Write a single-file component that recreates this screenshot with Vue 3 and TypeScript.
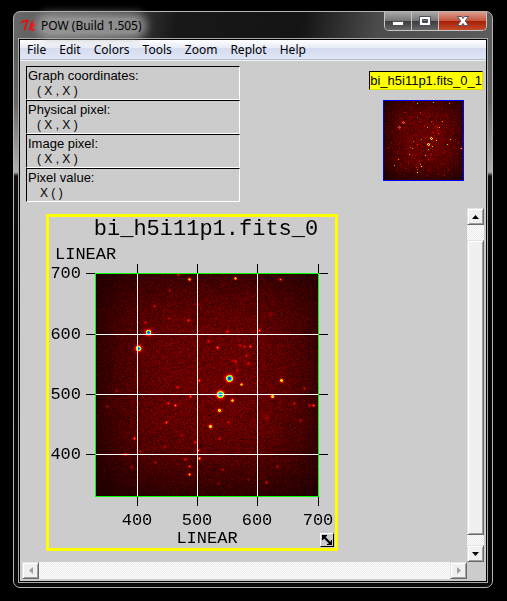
<script setup lang="ts">
import { onMounted, ref } from 'vue'

type Star = [x: number, y: number, peak: number, sigma?: number]

const menus = ['File', 'Edit', 'Colors', 'Tools', 'Zoom', 'Replot', 'Help']

const readouts = [
  { label: 'Graph coordinates:', value: '( X , X )', deep: false },
  { label: 'Physical pixel:', value: '( X , X )', deep: false },
  { label: 'Image pixel:', value: '( X , X )', deep: false },
  { label: 'Pixel value:', value: 'X ( )', deep: true },
]

const FIELD = 222

const xTicks = [
  { at: 88, label: '400' },
  { at: 148, label: '500' },
  { at: 208, label: '600' },
  { at: 269, label: '700' },
]
const yTicks = [
  { at: 56, label: '700' },
  { at: 117, label: '600' },
  { at: 177, label: '500' },
  { at: 237, label: '400' },
]

const stars: Star[] = [
  [52, 58, 1.32, 1.5], [42, 74, 1.28, 1.5], [133, 104, 1.38, 1.9], [124, 120, 1.3, 2],
  [93, 5, 0.75], [139, 4, 0.7], [184, 5, 0.4], [82, 0, 0.3], [73, 16, 0.2], [58, 32, 0.25],
  [101, 30, 0.3], [92, 46, 0.32], [73, 44, 0.16], [49, 48, 0.24], [131, 57, 0.3],
  [163, 56, 0.4], [112, 67, 0.22], [121, 73, 0.35], [144, 71, 0.2], [148, 72, 0.25],
  [154, 72, 0.33], [150, 81, 0.18], [152, 89, 0.25], [139, 87, 0.22], [136, 86, 0.14],
  [141, 96, 0.18], [145, 110, 0.6], [136, 126, 0.6, 1.1], [123, 136, 0.7, 1.2],
  [114, 152, 0.72, 1.2], [103, 106, 0.33], [185, 106, 0.7, 1.2], [176, 122, 0.7, 1.2],
  [208, 114, 0.24], [198, 129, 0.22], [213, 131, 0.25], [217, 131, 0.4], [204, 146, 0.22],
  [81, 113, 0.24], [94, 122, 0.34], [72, 129, 0.3], [79, 131, 0.34], [20, 116, 0.16],
  [11, 132, 0.18], [70, 148, 0.35], [132, 148, 0.2], [38, 164, 0.42], [29, 180, 0.42],
  [44, 177, 0.18], [59, 188, 0.18], [35, 193, 0.18], [68, 172, 0.16], [85, 161, 0.16],
  [99, 168, 0.27], [102, 176, 0.38], [103, 184, 0.58], [89, 185, 0.28], [93, 192, 0.32],
  [93, 200, 0.56], [123, 164, 0.22], [126, 195, 0.2], [181, 192, 0.22], [170, 208, 0.27],
  [170, 143, 0.1, 2], [122, 209, 0.15], [152, 205, 0.12], [174, 40, 0.1, 1.4],
]

const palette: [number, number, number, number][] = [
  [0, 0, 0, 0],
  [0.4, 255, 0, 0],
  [0.5, 255, 120, 0],
  [0.64, 255, 255, 0],
  [0.85, 60, 255, 40],
  [1.1, 0, 230, 255],
  [1.4, 20, 70, 255],
  [1.7, 20, 40, 255],
]

function heat(v: number): [number, number, number] {
  for (let i = 1; i < palette.length; i++) {
    const hi = palette[i]
    if (v <= hi[0]) {
      const lo = palette[i - 1]
      const t = Math.max(0, (v - lo[0]) / (hi[0] - lo[0]))
      return [lo[1] + (hi[1] - lo[1]) * t, lo[2] + (hi[2] - lo[2]) * t, lo[3] + (hi[3] - lo[3]) * t]
    }
  }
  return [20, 40, 255]
}

function drawField(canvas: HTMLCanvasElement, seed: number) {
  const size = canvas.width
  const scale = size / FIELD
  const ctx = canvas.getContext('2d')
  if (!ctx) return

  let state = seed
  const random = () => {
    state = (state * 1664525 + 1013904223) >>> 0
    return state / 4294967296
  }

  const flux = new Float32Array(size * size)
  for (let y = 0; y < size; y++) {
    for (let x = 0; x < size; x++) {
      const dx = (x / size - 0.52) * 2
      const dy = (y / size - 0.47) * 2
      const glow = 0.035 + 0.125 * Math.exp(-(dx ** 4 + dy ** 4) * 0.85 - (dx * dx + dy * dy) * 0.15)
      const grain = 0.5 + (random() + random()) * 0.5
      flux[y * size + x] = glow * grain
    }
  }

  for (const [sx, sy, peak, sigma = 0.95] of stars) {
    const cx = Math.round(sx * scale)
    const cy = Math.round(sy * scale)
    const s = Math.max(0.42, sigma * scale)
    for (let y = Math.max(0, cy - 7); y <= Math.min(size - 1, cy + 7); y++) {
      for (let x = Math.max(0, cx - 7); x <= Math.min(size - 1, cx + 7); x++) {
        const r2 = (x - cx) ** 2 + (y - cy) ** 2
        flux[y * size + x] += peak * Math.exp(-r2 / (2 * s * s))
        if (peak > 1) flux[y * size + x] += 0.14 * Math.exp(-r2 / (20 * scale * scale))
      }
    }
  }

  const image = ctx.createImageData(size, size)
  flux.forEach((v, i) => {
    const [r, g, b] = heat(v)
    image.data.set([r, g, b, 255], i * 4)
  })
  ctx.putImageData(image, 0, 0)
}

const field = ref<HTMLCanvasElement | null>(null)
const preview = ref<HTMLCanvasElement | null>(null)

onMounted(() => {
  if (field.value) drawField(field.value, 1505)
  if (preview.value) drawField(preview.value, 77)
})
</script>

<template>
  <main class="window">
    <header class="titlebar">
      <svg class="tk" viewBox="0 0 15 13" width="15" height="13" aria-hidden="true">
        <path d="M0.500 4C1 1.500 3 2 4.500 2L7.500 1.500M6.500 2C5 5 4 8 3.500 11.500" />
        <path d="M12 1C10.500 4 9 8 8.500 11.500M9.500 7.500C10.500 5.500 12.500 4.500 13.500 5.500C13.500 7 11.500 8 10 8L11.500 11.500L13.500 10" />
      </svg>
      <span class="title">POW (Build 1.505)</span>
      <div class="caption-buttons">
        <button class="caption" type="button" aria-label="Minimize">
          <svg viewBox="0 0 14 12" width="14" height="12"><rect x="1.500" y="6.500" width="11" height="4" fill="#fff" stroke="#4b5060" /></svg>
        </button>
        <button class="caption" type="button" aria-label="Maximize">
          <svg viewBox="0 0 14 12" width="14" height="12">
            <path d="M1.500 1.500h11v9h-11zM4.500 4.500v3h5v-3z" fill="#fff" fill-rule="evenodd" stroke="#4b5060" />
          </svg>
        </button>
        <button class="caption close" type="button" aria-label="Close">
          <svg viewBox="0 0 14 12" width="14" height="12">
            <path d="M1.500 1.500h4L7 3.500l1.500-2h4L9.300 6l3.200 4.500h-4L7 8.500l-1.500 2h-4L4.700 6z" fill="#fff" stroke="#55505c" />
          </svg>
        </button>
      </div>
    </header>

    <div class="client">
      <nav class="menubar">
        <button v-for="menu in menus" :key="menu" class="menu" type="button">{{ menu }}</button>
      </nav>

      <div class="overview">
        <div class="readouts">
          <div v-for="item in readouts" :key="item.label" class="readout">
            <div class="name">{{ item.label }}</div>
            <div class="value" :class="{ deep: item.deep }">{{ item.value }}</div>
          </div>
        </div>
        <div class="selector">
          <div class="selector-name">bi_h5i11p1.fits_0_1</div>
          <canvas ref="preview" class="preview" width="79" height="79"></canvas>
        </div>
      </div>

      <div class="workspace">
        <div class="viewport">
          <div class="plot">
            <canvas ref="field" class="field" width="222" height="222"></canvas>
            <svg class="axes" viewBox="0 0 286 331" width="286" height="331">
              <g>
                <g v-for="t in xTicks" :key="'x' + t.label">
                  <rect :x="t.at" y="47" width="1" height="9" />
                  <rect :x="t.at" y="280" width="1" height="9" />
                </g>
                <g v-for="t in yTicks" :key="'y' + t.label">
                  <rect x="37" :y="t.at" width="9" height="1" />
                  <rect x="270" :y="t.at" width="9" height="1" />
                </g>
              </g>
              <rect class="outline" x="46.500" y="56.500" width="223" height="223" />
              <g class="grid">
                <rect v-for="t in xTicks.slice(0, 3)" :key="t.label" :x="t.at" y="57" width="1" height="222" />
                <rect v-for="t in yTicks.slice(1)" :key="t.label" x="47" :y="t.at" width="222" height="1" />
              </g>
              <text class="heading" x="157" y="18" text-anchor="middle">bi_h5i11p1.fits_0</text>
              <text x="6" y="42">LINEAR</text>
              <text x="158" y="326" text-anchor="middle">LINEAR</text>
              <text v-for="t in yTicks" :key="'yl' + t.label" x="32" :y="t.at + 5" text-anchor="end">{{ t.label }}</text>
              <text v-for="t in xTicks" :key="'xl' + t.label" :x="t.at" y="308" text-anchor="middle">{{ t.label }}</text>
            </svg>
            <button class="resize" type="button" aria-label="Resize graph">
              <svg viewBox="0 0 12 12" width="12" height="12">
                <path d="M1 1h5v1L4.500 3l5 5L10 6h1v5H6v-1l2-0.500-5-5L2 6H1z" />
              </svg>
            </button>
          </div>
        </div>
        <div class="scrollbar vertical">
          <button class="arrow" type="button" aria-label="Scroll up">
            <svg viewBox="0 0 7 4" width="7" height="4"><path d="M0 4L3.500 0L7 4z" /></svg>
          </button>
          <div class="track"><div class="thumb"></div></div>
          <button class="arrow" type="button" aria-label="Scroll down">
            <svg viewBox="0 0 7 4" width="7" height="4"><path d="M0 0h7L3.500 4z" /></svg>
          </button>
        </div>
        <div class="scrollbar horizontal">
          <button class="arrow" type="button" aria-label="Scroll left" disabled>
            <svg viewBox="0 0 4 7" width="4" height="7"><path d="M4 0v7L0 3.500z" /></svg>
          </button>
          <div class="track"></div>
          <button class="arrow" type="button" aria-label="Scroll right" disabled>
            <svg viewBox="0 0 4 7" width="4" height="7"><path d="M0 0v7L4 3.500z" /></svg>
          </button>
        </div>
      </div>
    </div>
  </main>
</template>

<style>
body {
  background: #000;
}
</style>

<style scoped>
.window {
  box-sizing: border-box;
  margin: 11px 14px 13px 13px;
  padding: 0 5px 5px;
  border: 1px solid #b4b4b4;
  border-radius: 7px;
  background:
    linear-gradient(100deg, #686868 0, #4a4a4a 20%, #181818 34%, #141414 60%, #4c4c4c 76%, #5c5c5c 100%) 0 0 / 100% 28px no-repeat,
    linear-gradient(#5c5c5c 28px, #666 90px, #b0b0b0 160px, #101010 164px, #040404 300px, #0a0a0a 100%);
  font: 12px/15px "Liberation Sans", Arial, sans-serif;
  color: #000;
}

button {
  display: flex;
  align-items: center;
  justify-content: center;
  padding: 0;
  border: 0;
  background: none;
  color: inherit;
  font: inherit;
}

.titlebar {
  display: flex;
  align-items: center;
  gap: 5px;
  height: 27px;
  padding-left: 2px;
}

.tk {
  fill: none;
  stroke: #f00;
  stroke-width: 1.5;
}

.title {
  font: 12px/16px "Noto Sans", "Open Sans", sans-serif;
  border-radius: 8px;
  background: rgba(165, 165, 165, 0.75);
  box-shadow: 0 0 8px 5px rgba(165, 165, 165, 0.75);
}

.caption-buttons {
  display: flex;
  align-self: flex-start;
  margin-left: auto;
  border: 1px solid #c4c4c4;
  border-top: 0;
  border-radius: 0 0 5px 5px;
  overflow: hidden;
}

.caption {
  width: 27px;
  height: 18px;
  border-right: 1px solid #c4c4c4;
  background: linear-gradient(#a8a8a8, #777 48%, #3c3c3c 52%, #666);
}

.caption.close {
  width: 47px;
  border-right: 0;
  background: linear-gradient(#dc9c8e, #c5573f 48%, #a52008 52%, #c44a28);
}

.client {
  border: 1px solid #000;
  outline: 1px solid #a8a8a8;
  background: #ccc;
}

.menubar {
  display: flex;
  gap: 13px;
  height: 19px;
  padding-left: 7px;
  border-bottom: 1px solid #b6bccc;
  box-shadow: 0 1px #f0f0f0;
  background: linear-gradient(#fff, #e8ecf7 40%, #d6dcef 45%, #dfe6f6);
}

.menu {
  font: 12px/19px "Noto Sans", "Open Sans", sans-serif;
}

.overview {
  display: flex;
  justify-content: space-between;
  padding: 6px 3px 6px 6px;
}

.readouts {
  width: 214px;
}

.readout {
  height: 32px;
  padding-left: 1px;
  border: 1px solid #000;
  border-right-color: #fff;
  border-bottom-color: #fff;
}

.readout > div {
  padding-top: 1px;
  line-height: 15px;
}

.name,
.selector-name {
  font-size: 13px;
}

.readout .value {
  padding-left: 9px;
}

.readout .value.deep {
  padding-left: 12px;
}

.selector {
  display: flex;
  flex-direction: column;
  align-items: center;
  gap: 10px;
  padding-top: 5px;
}

.selector-name {
  padding: 1px 0;
  border: 1px solid #000;
  border-right-color: #e0e000;
  border-bottom-color: #e0e000;
  background: #ff0;
}

.preview {
  margin-right: 6px;
  border: 1px solid #00f;
}

.workspace {
  display: grid;
  grid-template-columns: 1fr 17px;
  padding: 0 2px 2px;
}

.viewport {
  padding: 6px 24px 11px;
}

.plot {
  position: relative;
  width: 286px;
  border: 3px solid #ff0;
}

.field {
  position: absolute;
  left: 47px;
  top: 57px;
}

.axes {
  position: relative;
  display: block;
  font: 17px "Liberation Mono", "Courier New", monospace;
}

.heading {
  font-size: 22px;
}

.grid {
  fill: #fff;
}

.outline {
  fill: none;
  stroke: #0f0;
}

.resize {
  position: absolute;
  right: 1px;
  bottom: 1px;
  border: 1px solid #000;
  border-top-color: #fff;
  border-left-color: #fff;
  background: #ccc;
}

.scrollbar {
  display: flex;
}

.vertical {
  flex-direction: column;
}

.track {
  flex: 1;
  background: repeating-conic-gradient(#fff 0 25%, #e9e9e9 0 50%) 0 0 / 2px 2px;
}

.arrow,
.thumb {
  box-sizing: border-box;
  width: 17px;
  height: 17px;
  border: 1px solid #696969;
  border-top-color: #e3e3e3;
  border-left-color: #e3e3e3;
  background: #f0f0f0;
  box-shadow: inset 1px 1px #fff, inset -1px -1px #a0a0a0;
}

.arrow:disabled svg {
  fill: #a0a0a0;
}

.vertical .track {
  display: flex;
  flex-direction: column;
  padding: 15px 0 10px;
}

.thumb {
  flex: 1;
  height: auto;
}
</style>
